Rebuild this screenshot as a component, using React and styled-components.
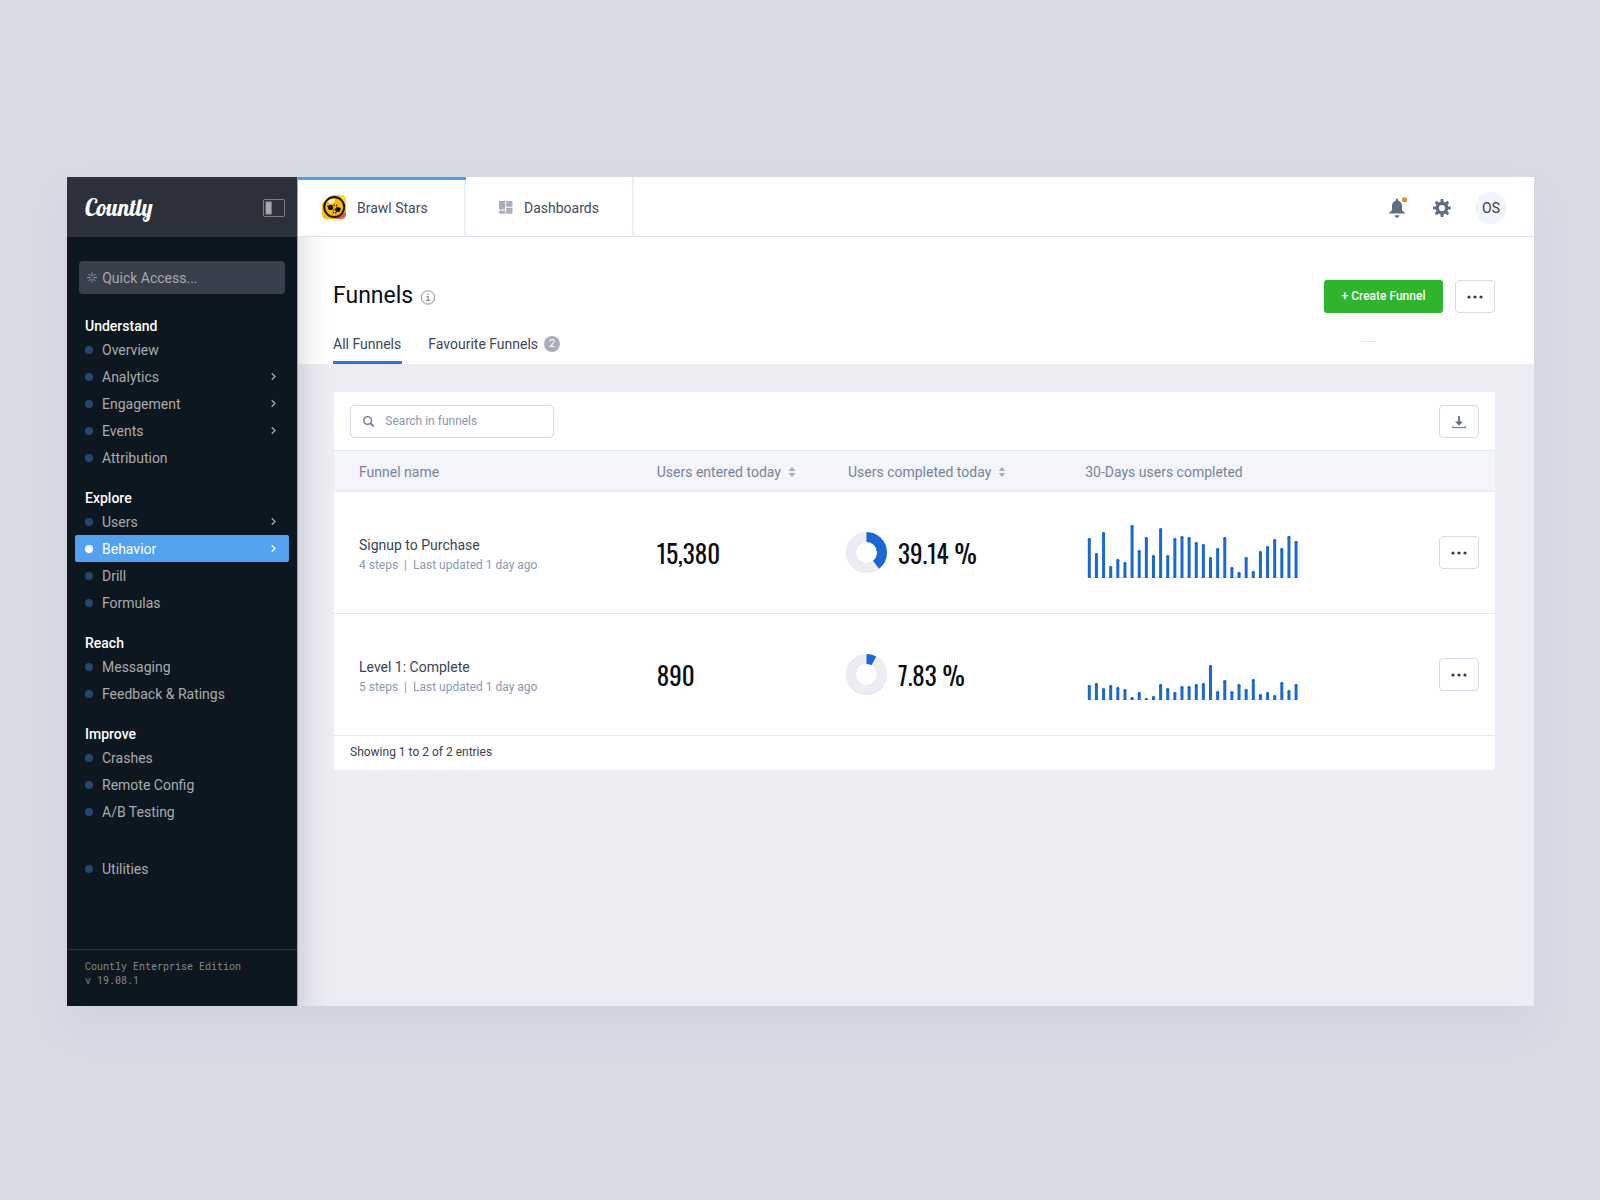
import React, { useState } from 'react'
import styled, { createGlobalStyle, css } from 'styled-components'

const GlobalStyle = createGlobalStyle`
  * {
    box-sizing: border-box;
  }

  body {
    margin: 0;
    background-color: #d8dbe4;
    font-family: Roboto, "Liberation Sans", sans-serif;
    font-size: 14px;
    color: #333c48;
  }

  button, input {
    font-family: inherit;
  }
`

const Page = styled.div`
  display: flex;
  min-height: 100vh;
  padding: 177px 66px 194px 67px;
`

const Window = styled.div`
  display: flex;
  flex: 1;
  background-color: #ecedf3;
  box-shadow: 0 20px 40px rgba(80, 90, 130, 0.06);
`

/* Sidebar */

const Sidebar = styled.aside`
  display: flex;
  flex-direction: column;
  flex: none;
  width: 231px;
  background-color: #0d171f;
  border-right: 1px solid #a3a7ad;
`

const Brand = styled.div`
  display: flex;
  align-items: center;
  justify-content: space-between;
  height: 60px;
  padding: 1px 12px 0 18px;
  background-color: #2b303a;
`

const Logo = styled.a`
  font-family: Lobster, "Liberation Serif", serif;
  font-size: 23px;
  font-weight: 400;
  color: #fff;
  text-decoration: none;
`

const IconButton = styled.button`
  display: flex;
  align-items: center;
  justify-content: center;
  padding: 0;
  border: 0;
  background: none;
  color: #5f6d80;
  cursor: pointer;
`

const QuickAccess = styled.label`
  display: flex;
  align-items: center;
  gap: 5px;
  height: 33px;
  margin: 24px 12px 22px;
  padding: 0 8px;
  border-radius: 4px;
  background-color: #3a3f4d;
`

const QuickInput = styled.input`
  width: 100%;
  padding: 0;
  border: 0;
  outline: 0;
  background: none;
  font-size: 14px;
  color: #fff;

  &::placeholder {
    color: #a8a9ab;
    opacity: 1;
  }
`

const Nav = styled.nav`
  flex: 1;
  padding: 0 8px 24px;
`

const NavTitle = styled.h2`
  margin: 0;
  padding-left: 10px;
  font-size: 14px;
  font-weight: 500;
  line-height: 20px;
  color: #fff;
`

const NavList = styled.ul`
  margin: 0 0 17px;
  padding: 0;
  list-style: none;
`

const NavLink = styled.a`
  display: flex;
  align-items: center;
  height: 27px;
  padding: 0 12px 0 10px;
  border-radius: 2px;
  color: #a9abac;
  text-decoration: none;

  &::before {
    content: "";
    width: 8px;
    height: 8px;
    margin-right: 9px;
    border-radius: 50%;
    background-color: #24486b;
  }

  svg {
    margin-left: auto;
  }

  ${props => props.$active && css`
    background-color: #52a2ef;
    color: #fff;

    &::before {
      background-color: #fff;
    }
  `}
`

const Utilities = styled.div`
  padding-top: 13px;
`

const Version = styled.footer`
  height: 57px;
  padding: 10px 18px;
  border-top: 1px solid #2b343d;
  font-family: "Roboto Mono", "DejaVu Sans Mono", monospace;
  font-size: 10px;
  line-height: 14px;
  color: #86898c;
`

/* Main area */

const Main = styled.div`
  display: flex;
  flex-direction: column;
  flex: 1;
  min-width: 0;
`

const TopBar = styled.header`
  display: flex;
  height: 60px;
  border-bottom: 1px solid #dbe2ec;
  background-color: #fff;
`

const AppTab = styled.a`
  display: flex;
  align-items: center;
  gap: ${props => (props.$active ? '10px' : '11px')};
  min-width: 168px;
  padding: 2px 32px 0 ${props => (props.$active ? '23px' : '33px')};
  box-shadow: inset 0 ${props => (props.$active ? '3px #4f9fee' : '0 transparent')}, inset -2px 0 #eceff5;
  color: #434b59;
  text-decoration: none;
`

const TopActions = styled.div`
  display: flex;
  align-items: center;
  gap: 24px;
  margin-left: auto;
  padding: 2px 27px 0 0;
`

const Avatar = styled.button`
  width: 32px;
  height: 32px;
  padding: 0;
  border: 0;
  border-radius: 50%;
  background-color: #f1f4fc;
  font-size: 14px;
  color: #3a3d42;
  cursor: pointer;
`

const Body = styled.div`
  position: relative;
  flex: 1;

  &::before {
    content: "";
    position: absolute;
    top: 0;
    bottom: 0;
    left: 0;
    width: 32px;
    background: linear-gradient(to right, rgba(30, 35, 50, 0.11), rgba(30, 35, 50, 0.03) 50%, transparent);
    pointer-events: none;
  }
`

const PageHead = styled.div`
  padding: 43px 39px 0 35px;
  background-color: #fff;
`

const TitleRow = styled.div`
  display: flex;
  align-items: center;
  height: 33px;
`

const Title = styled.h1`
  margin: 0 7px 2px 0;
  font-size: 23px;
  font-weight: 400;
  line-height: 31px;
  color: #0b0d12;
`

const TitleActions = styled.div`
  display: flex;
  gap: 12px;
  margin-left: auto;
`

const CreateButton = styled.button`
  width: 119px;
  height: 33px;
  padding: 0 0 1px;
  border: 0;
  border-radius: 3px;
  background-color: #2fb52d;
  font-size: 12px;
  font-weight: 500;
  color: #fff;
  cursor: pointer;
`

const BoxButton = styled(IconButton)`
  width: 40px;
  height: 33px;
  border: 1px solid #d3dbe8;
  border-radius: 4px;
  background-color: #fff;
`

const Tabs = styled.div`
  display: flex;
  align-items: center;
  gap: 26px;
  height: 51px;
`

const Tab = styled.button`
  display: flex;
  align-items: center;
  gap: 6px;
  height: 51px;
  padding: 13px 1px 0 0;
  border: 0;
  border-bottom: 3px solid ${props => (props.$active ? '#2f76da' : 'transparent')};
  background: none;
  font-size: 14px;
  color: #3d4654;
  cursor: pointer;
`

const Count = styled.span`
  width: 16px;
  height: 16px;
  border-radius: 50%;
  background-color: #a7aebb;
  font-size: 11px;
  line-height: 16px;
  color: #fff;
`

const Dash = styled.span`
  width: 15px;
  height: 1px;
  margin: 6px 119px 0 auto;
  background-color: #f6e8c4;
`

const Card = styled.section`
  margin: 28px 39px 28px 36px;
  border-radius: 2px;
  background-color: #fff;
`

const Toolbar = styled.div`
  display: flex;
  align-items: center;
  justify-content: space-between;
  height: 59px;
  padding: 0 16px;
  border-bottom: 1px solid #e2e6ee;
`

const Search = styled.label`
  display: flex;
  align-items: center;
  gap: 11px;
  width: 204px;
  height: 33px;
  padding: 0 12px;
  border: 1px solid #d3dbe8;
  border-radius: 4px;
`

const SearchInput = styled.input`
  width: 100%;
  padding: 0;
  border: 0;
  outline: 0;
  font-size: 12px;
  color: #333c48;

  &::placeholder {
    color: #8796ab;
    opacity: 1;
  }
`

const Table = styled.table`
  width: 100%;
  table-layout: fixed;
  border-spacing: 0;
`

const HeadCell = styled.th`
  width: ${props => props.$width || 'auto'};
  height: 41px;
  padding: 3px 0 0 ${props => props.$left || '0'};
  border-bottom: 2px solid #eceff5;
  background-color: #f4f5fa;
  font-weight: 400;
  text-align: left;
  color: #76849a;
`

const SortButton = styled.button`
  display: flex;
  align-items: center;
  gap: 7px;
  padding: 0;
  border: 0;
  background: none;
  font-size: 14px;
  color: inherit;
  cursor: pointer;
`

const Cell = styled.td`
  height: 122px;
  padding: 0 0 0 ${props => props.$left || '0'};
  border-bottom: 1px solid #e2e6ee;
`

const FunnelName = styled.div`
  padding-top: 4px;
  font-size: 14px;
  line-height: 20px;
  color: #3b4452;
`

const FunnelMeta = styled.div`
  font-size: 12px;
  line-height: 20px;
  color: #8a99af;
  white-space: pre;
`

const Figure = styled.div`
  display: flex;
  align-items: center;
  gap: 11px;
  font-family: Oswald, "Liberation Sans Narrow", Roboto, sans-serif;
  font-size: 25px;
  line-height: 32px;
  color: #0b0d12;
`

const Bars = styled.svg`
  display: block;
  margin-bottom: 3px;
`

const RowAction = styled.div`
  display: flex;
  justify-content: flex-end;
  padding-right: 16px;
`

const CardFoot = styled.div`
  padding: 0 16px 2px;
  font-size: 12px;
  line-height: 32px;
  color: #3f4247;
`

/* Icons */

const CollapseIcon = () => (
  <svg width="22" height="18" viewBox="0 0 22 18">
    <rect x="0.5" y="0.5" width="21" height="17" rx="1" fill="none" stroke="#7b7f86" />
    <rect x="2.6" y="2.6" width="6" height="12.8" fill="#a6a7aa" />
  </svg>
)

const SparkIcon = () => (
  <svg width="11" height="11" viewBox="0 0 11 11" stroke="#a8a9ab" strokeWidth="0.9">
    {[0, 45, 90, 135, 180, 225, 270, 315].map(a => (
      <path key={a} d="M5.5 0V3.8" transform={`rotate(${a} 5.5 5.5)`} />
    ))}
  </svg>
)

const ChevronIcon = () => (
  <svg width="7" height="9" viewBox="0 0 7 9" fill="none" stroke="currentColor" strokeWidth="1.3">
    <path d="M1.7 1.2L5 4.5L1.7 7.8" />
  </svg>
)

const BrawlIcon = () => (
  <svg width="26" height="28" viewBox="0 0 26 28">
    <defs>
      <clipPath id="tile">
        <rect x="1" y="1" width="24" height="24" rx="5" />
      </clipPath>
    </defs>
    <rect x="1" y="3" width="24" height="24" rx="5" fill="#000" opacity="0.08" />
    <g clipPath="url(#tile)">
      <rect width="26" height="26" fill="#fdbd05" />
      <path d="M0 0H14L5 6L0 11Z" fill="#fbfbf6" />
      <path d="M14 0H26V12L18 6Z" fill="#fbdc22" />
      <path d="M12 26L21 19L26 18V26Z" fill="#d95b41" />
      <circle cx="13.2" cy="13" r="10" fill="#fdb806" stroke="#181206" strokeWidth="1.9" />
    </g>
    <ellipse cx="10.5" cy="7.4" rx="3.2" ry="2" transform="rotate(-20 10.5 7.4)" fill="#fff7e0" />
    <circle cx="9.6" cy="13.4" r="2.6" fill="#181206" />
    <circle cx="16.8" cy="15.5" r="2.6" fill="#181206" />
    <path d="M13.1 14.6L14 16.4L12.2 16.2Z" fill="#181206" />
    <path d="M6.2 12.2L8 13M19.8 14.4L18 15M12.4 17.8V19.2M14.8 18V19.4M13.2 10.6V12M15.6 10.8V12.2" stroke="#181206" strokeWidth="1.2" />
  </svg>
)

const DashboardIcon = () => (
  <svg width="14" height="13" viewBox="0 0 14 13" fill="#a8aebb">
    <rect width="6.2" height="8.6" rx="0.6" />
    <rect y="9.6" width="6.2" height="3.2" rx="0.6" />
    <rect x="7.2" width="6.2" height="5.8" rx="0.6" />
    <rect x="7.2" y="6.7" width="6.2" height="6.1" rx="0.6" />
  </svg>
)

const BellIcon = () => (
  <svg width="22" height="22" viewBox="0 0 22 22" fill="#5f6d80">
    <path d="M8.9 3.6C8.9 2 9.3 1.4 10 1.4C10.7 1.4 11.1 2 11.1 3.6C13.9 4.6 15 6.7 15 9.3V12.4C15 14 18.2 15.2 18.2 16.6H1.8C1.8 15.2 5 14 5 12.4V9.3C5 6.7 6.1 4.6 8.9 3.6Z" />
    <path d="M7.6 18.2H12.4C12.1 19.7 11.3 20.7 10 20.7C8.7 20.7 7.9 19.7 7.6 18.2Z" />
    <circle cx="17.5" cy="2.7" r="2.5" fill="#dd8d1a" />
  </svg>
)

const GearIcon = () => (
  <svg width="18" height="18" viewBox="0 0 18 18">
    {[0, 45, 90, 135, 180, 225, 270, 315].map(a => (
      <path key={a} d="M7.2 4L7.7 0.1H10.3L10.8 4Z" fill="#5f6d80" transform={`rotate(${a} 9 9)`} />
    ))}
    <circle cx="9" cy="9" r="4.7" fill="none" stroke="#5f6d80" strokeWidth="3.2" />
  </svg>
)

const InfoIcon = () => (
  <svg width="16" height="16" viewBox="0 0 16 16" fill="none" stroke="#8f9194">
    <circle cx="8" cy="8.5" r="6.7" />
    <path d="M6.3 7.5H8.2V11.3M6 11.4H10.2" strokeWidth="1.2" />
    <circle cx="8" cy="5.4" r="0.8" fill="#8f9194" stroke="none" />
  </svg>
)

const MoreIcon = () => (
  <svg width="16" height="4" viewBox="0 0 16 4" fill="#36383c">
    <circle cx="2" cy="2" r="1.6" />
    <circle cx="8" cy="2" r="1.6" />
    <circle cx="14" cy="2" r="1.6" />
  </svg>
)

const SearchIcon = () => (
  <svg width="13" height="13" viewBox="0 0 13 13" fill="none" stroke="#6b7a8d" strokeWidth="1.6">
    <circle cx="5.3" cy="5.3" r="4.4" />
    <path d="M8.5 8.5L12.4 12.2" strokeWidth="2" />
  </svg>
)

const DownloadIcon = () => (
  <svg width="14" height="16" viewBox="0 0 14 16" fill="#5f6d80">
    <path d="M6.1 3H7.9V8.6H11L7 12.8L3 8.6H6.1Z" />
    <path d="M0.8 12.8V14.6H13.2V12.8" fill="none" stroke="#7e8998" strokeWidth="1.2" />
  </svg>
)

const SortIcon = () => (
  <svg width="8" height="10" viewBox="0 0 8 10" fill="#a8aeb9">
    <path d="M4 0L7.5 4H0.5Z" />
    <path d="M4 10L0.5 6H7.5Z" />
  </svg>
)

const Donut = ({ value }) => {
  const length = 2 * Math.PI * 15.5
  return (
    <svg width="41" height="41" viewBox="0 0 41 41" fill="none">
      <circle cx="20.5" cy="20.5" r="15.5" stroke="#e4e6ee" strokeWidth="10" />
      <circle cx="20.5" cy="20.5" r="15.5" stroke="#ecedf3" strokeWidth="8.6" />
      <circle
        cx="20.5"
        cy="20.5"
        r="15.5"
        stroke="#1a67d5"
        strokeWidth="10"
        strokeDasharray={`${(length * value) / 100} ${length}`}
        transform="rotate(-90 20.5 20.5)"
      />
    </svg>
  )
}

const BarChart = ({ data, label }) => (
  <Bars width="214" height="53" viewBox="0 0 214 53" role="img" aria-label={label}>
    <path d="M3 52.5H213" stroke="#e6ecf6" />
    {data.map((h, i) => (
      <path
        key={i}
        d={`M${4.3 + i * 7.13} 53V${54.3 - h}`}
        stroke="#1a67d5"
        strokeWidth="3"
      />
    ))}
    {data.map((h, i) => (
      <circle key={i} cx={4.3 + i * 7.13} cy={54.3 - h} r="1.5" fill="#1a67d5" />
    ))}
  </Bars>
)

const sections = [
  {
    title: 'Understand',
    items: [
      { name: 'Overview' },
      { name: 'Analytics', more: true },
      { name: 'Engagement', more: true },
      { name: 'Events', more: true },
      { name: 'Attribution' }
    ]
  },
  {
    title: 'Explore',
    items: [
      { name: 'Users', more: true },
      { name: 'Behavior', more: true, active: true },
      { name: 'Drill' },
      { name: 'Formulas' }
    ]
  },
  {
    title: 'Reach',
    items: [{ name: 'Messaging' }, { name: 'Feedback & Ratings' }]
  },
  {
    title: 'Improve',
    items: [{ name: 'Crashes' }, { name: 'Remote Config' }, { name: 'A/B Testing' }]
  }
]

const funnels = [
  {
    name: 'Signup to Purchase',
    steps: 4,
    entered: '15,380',
    completed: 39.14,
    days: [
      40, 25, 46, 12, 19, 16, 53, 28, 41, 23, 50, 23, 40, 42, 41,
      36, 34, 21, 30, 41, 11, 6, 21, 7, 27, 32, 39, 30, 42, 37
    ]
  },
  {
    name: 'Level 1: Complete',
    steps: 5,
    entered: '890',
    completed: 7.83,
    days: [
      15, 17, 12, 15, 13, 11, 3, 8, 2, 4, 16, 12, 8, 14, 14,
      16, 17, 35, 9, 20, 9, 16, 11, 21, 6, 8, 5, 18, 10, 16
    ]
  }
]

const FunnelRow = ({ funnel }) => (
  <tr>
    <Cell $left="25px">
      <FunnelName>{funnel.name}</FunnelName>
      <FunnelMeta>{`${funnel.steps} steps  |  Last updated 1 day ago`}</FunnelMeta>
    </Cell>
    <Cell>
      <Figure>{funnel.entered}</Figure>
    </Cell>
    <Cell>
      <Figure>
        <Donut value={funnel.completed} />
        {`${funnel.completed} %`}
      </Figure>
    </Cell>
    <Cell>
      <BarChart data={funnel.days} label={`${funnel.name}, 30 days`} />
    </Cell>
    <Cell>
      <RowAction>
        <BoxButton aria-label={`Actions for ${funnel.name}`}><MoreIcon /></BoxButton>
      </RowAction>
    </Cell>
  </tr>
)

const App = () => {
  const [tab, setTab] = useState('all')

  return (
    <Page>
      <GlobalStyle />
      <Window>
        <Sidebar>
          <Brand>
            <Logo href="#">Countly</Logo>
            <IconButton aria-label="Collapse sidebar"><CollapseIcon /></IconButton>
          </Brand>
          <QuickAccess>
            <SparkIcon />
            <QuickInput type="text" aria-label="Quick Access" placeholder="Quick Access..." />
          </QuickAccess>
          <Nav>
            {sections.map(section => (
              <React.Fragment key={section.title}>
                <NavTitle>{section.title}</NavTitle>
                <NavList>
                  {section.items.map(item => (
                    <li key={item.name}>
                      <NavLink href="#" $active={item.active}>
                        {item.name}
                        {item.more && <ChevronIcon />}
                      </NavLink>
                    </li>
                  ))}
                </NavList>
              </React.Fragment>
            ))}
            <Utilities>
              <NavLink href="#">Utilities</NavLink>
            </Utilities>
          </Nav>
          <Version>
            Countly Enterprise Edition
            <br />
            v 19.08.1
          </Version>
        </Sidebar>
        <Main>
          <TopBar>
            <AppTab href="#" $active>
              <BrawlIcon />
              Brawl Stars
            </AppTab>
            <AppTab href="#">
              <DashboardIcon />
              Dashboards
            </AppTab>
            <TopActions>
              <IconButton aria-label="Notifications"><BellIcon /></IconButton>
              <IconButton aria-label="Settings"><GearIcon /></IconButton>
              <Avatar>OS</Avatar>
            </TopActions>
          </TopBar>
          <Body>
            <PageHead>
              <TitleRow>
                <Title>Funnels</Title>
                <InfoIcon />
                <TitleActions>
                  <CreateButton>+ Create Funnel</CreateButton>
                  <BoxButton aria-label="More"><MoreIcon /></BoxButton>
                </TitleActions>
              </TitleRow>
              <Tabs>
                <Tab $active={tab === 'all'} onClick={() => setTab('all')}>All Funnels</Tab>
                <Tab $active={tab === 'favourite'} onClick={() => setTab('favourite')}>
                  Favourite Funnels
                  <Count>2</Count>
                </Tab>
                <Dash />
              </Tabs>
            </PageHead>
            <Card>
              <Toolbar>
                <Search>
                  <SearchIcon />
                  <SearchInput type="text" aria-label="Search in funnels" placeholder="Search in funnels" />
                </Search>
                <BoxButton aria-label="Download"><DownloadIcon /></BoxButton>
              </Toolbar>
              <Table>
                <thead>
                  <tr>
                    <HeadCell $width="27.8%" $left="25px">Funnel name</HeadCell>
                    <HeadCell $width="16.3%"><SortButton>Users entered today<SortIcon /></SortButton></HeadCell>
                    <HeadCell $width="20.6%" $left="2px"><SortButton>Users completed today<SortIcon /></SortButton></HeadCell>
                    <HeadCell $width="27%">30-Days users completed</HeadCell>
                    <HeadCell aria-label="Actions" />
                  </tr>
                </thead>
                <tbody>
                  {funnels.map(funnel => (
                    <FunnelRow key={funnel.name} funnel={funnel} />
                  ))}
                </tbody>
              </Table>
              <CardFoot>Showing 1 to 2 of 2 entries</CardFoot>
            </Card>
          </Body>
        </Main>
      </Window>
    </Page>
  )
}

export default App
